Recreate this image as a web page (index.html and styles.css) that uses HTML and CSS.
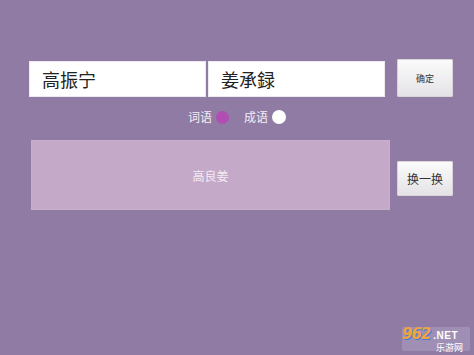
FILE: index.html
```html
<!DOCTYPE html>
<html lang="zh">
<head>
<meta charset="utf-8">
<link rel="stylesheet" href="styles.css">
</head>
<body>
<div class="app">
  <div class="row-inputs">
    <div class="field">高振宁</div>
    <div class="field">姜承録</div>
    <button class="btn btn-ok">确定</button>
  </div>
  <div class="row-radio">
    <span class="opt">词语</span><span class="dot dot-on"></span>
    <span class="opt opt2">成语</span><span class="dot dot-off"></span>
  </div>
  <div class="row-result">
    <div class="panel">高良姜</div>
    <button class="btn btn-swap">换一换</button>
  </div>
</div>
<div class="logo">
  <div class="logo-top"><span class="logo-num">962</span><span class="logo-net">.NET</span></div>
  <div class="logo-cn">乐游网</div>
</div>
</body>
</html>
```
FILE: styles.css
```css
html, body {
  margin: 0;
  padding: 0;
}
body {
  width: 474px;
  height: 355px;
  background: #8f7ba3;
  font-family: "Noto Sans CJK SC", "Liberation Sans", sans-serif;
  position: relative;
  overflow: hidden;
}
.app {
  padding: 59px 0 0 29px;
  display: flex;
  flex-direction: column;
}
.row-inputs {
  display: flex;
  align-items: center;
  height: 38px;
}
.field {
  box-sizing: border-box;
  width: 177px;
  height: 36px;
  margin-top: 2px;
  background: #fff;
  border: 1px solid #efe9f2;
  padding-left: 12px;
  font-size: 18px;
  line-height: 34px;
  color: #222;
}
.field + .field {
  margin-left: 2px;
}
.btn {
  box-sizing: border-box;
  border: 1px solid #d8d4da;
  background: linear-gradient(#fbfbfb, #e4e2e6);
  color: #333;
  font-family: "Noto Sans CJK SC", sans-serif;
  padding: 0;
  border-radius: 1px;
}
.btn-ok {
  width: 56px;
  height: 38px;
  margin-left: 12px;
  font-size: 9px;
}
.row-radio {
  display: flex;
  align-items: center;
  height: 20px;
  margin-top: 10px;
  padding-left: 159px;
}
.opt {
  font-size: 12px;
  color: #f4eef6;
  line-height: 14px;
}
.opt2 {
  margin-left: 15px;
}
.dot {
  width: 13px;
  height: 13px;
  border-radius: 50%;
  margin-left: 4px;
}
.dot-on {
  background: #b14db3;
}
.dot-off {
  background: #ffffff;
  width: 14px;
  height: 14px;
}
.row-result {
  display: flex;
  align-items: flex-start;
  margin-top: 13px;
  padding-left: 2px;
}
.panel {
  width: 359px;
  height: 70px;
  background: #c4a9c9;
  border: 1px solid #c7aecb;
  box-sizing: border-box;
  display: flex;
  align-items: center;
  justify-content: center;
  color: #f3ecf4;
  font-size: 12px;
}
.btn-swap {
  width: 56px;
  height: 35px;
  margin-left: 7px;
  margin-top: 21px;
  font-size: 12px;
}
.logo {
  position: absolute;
  left: 402px;
  top: 327px;
  width: 68px;
  height: 24px;
  background: rgba(175, 160, 195, 0.55);
  border-radius: 2px;
}
.logo-top {
  display: flex;
  align-items: baseline;
  line-height: 14px;
}
.logo-num {
  font-family: "DejaVu Sans", sans-serif;
  font-weight: bold;
  font-style: italic;
  font-size: 15px;
  color: #f2a23e;
  text-shadow: 1px 1px 0 #3f7fd6;
  letter-spacing: -1px;
}
.logo-net {
  font-family: "Liberation Sans", sans-serif;
  font-weight: bold;
  font-size: 10px;
  color: #ffffff;
  margin-left: 3px;
  letter-spacing: 0.5px;
}
.logo-cn {
  font-size: 9px;
  color: #ffffff;
  line-height: 10px;
  padding-left: 34px;
}
```
